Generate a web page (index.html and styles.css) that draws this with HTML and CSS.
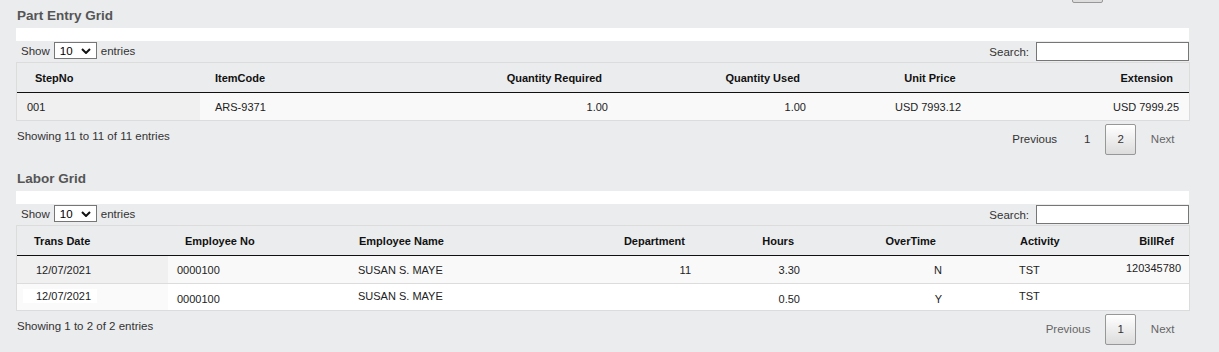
FILE: index.html
```html
<!DOCTYPE html>
<html>
<head>
<meta charset="utf-8">
<link rel="stylesheet" href="styles.css">
</head>
<body>
<div class="page">
  <div class="top-pager"><span class="pbtn current"></span></div>

  <section class="grid part">
    <h2 class="grid-title">Part Entry Grid</h2>
    <div class="white-bar"></div>
    <div class="controls">
      <label class="length">Show
        <span class="sel"><select><option>10</option></select><svg class="chev" width="10" height="6" viewBox="0 0 10 6"><path d="M1 1 L5 5 L9 1" fill="none" stroke="#111" stroke-width="2"/></svg></span>
        entries</label>
      <label class="search">Search:<input type="text"></label>
    </div>
    <div class="tbl-wrap">
      <table>
        <colgroup><col style="width:183px"><col style="width:220px"><col style="width:199px"><col style="width:198px"><col style="width:226px"><col style="width:146px"></colgroup>
        <thead>
          <tr>
            <th class="p-c1">StepNo</th>
            <th class="p-c2">ItemCode</th>
            <th class="r">Quantity Required</th>
            <th class="r">Quantity Used</th>
            <th class="c">Unit Price</th>
            <th class="r p-c6">Extension</th>
          </tr>
        </thead>
        <tbody>
          <tr class="odd">
            <td class="sort p-c1">001</td>
            <td class="p-c2">ARS-9371</td>
            <td class="r">1.00</td>
            <td class="r">1.00</td>
            <td class="c">USD 7993.12</td>
            <td class="r p-c6">USD 7999.25</td>
          </tr>
        </tbody>
      </table>
    </div>
    <div class="footer">
      <div class="info">Showing 11 to 11 of 11 entries</div>
      <div class="pager">
        <span class="pbtn">Previous</span>
        <span class="pbtn">1</span>
        <span class="pbtn current">2</span>
        <span class="pbtn disabled">Next</span>
      </div>
    </div>
  </section>

  <section class="grid labor">
    <h2 class="grid-title">Labor Grid</h2>
    <div class="white-bar"></div>
    <div class="controls">
      <label class="length">Show
        <span class="sel"><select><option>10</option></select><svg class="chev" width="10" height="6" viewBox="0 0 10 6"><path d="M1 1 L5 5 L9 1" fill="none" stroke="#111" stroke-width="2"/></svg></span>
        entries</label>
      <label class="search">Search:<input type="text"></label>
    </div>
    <div class="tbl-wrap">
      <table>
        <colgroup><col style="width:151px"><col style="width:180px"><col style="width:172px"><col style="width:182px"><col style="width:109px"><col style="width:198px"><col style="width:101px"><col style="width:79px"></colgroup>
        <thead>
          <tr>
            <th class="l-c1">Trans Date</th>
            <th class="l-c2">Employee No</th>
            <th class="l-c3">Employee Name</th>
            <th class="r">Department</th>
            <th class="r">Hours</th>
            <th class="r l-c6">OverTime</th>
            <th class="l-c7">Activity</th>
            <th class="r l-c8">BillRef</th>
          </tr>
        </thead>
        <tbody>
          <tr class="odd">
            <td class="sort l-c1">12/07/2021</td>
            <td class="l-c2">0000100</td>
            <td class="l-c3">SUSAN S. MAYE</td>
            <td class="r">11</td>
            <td class="r">3.30</td>
            <td class="r l-c6">N</td>
            <td class="l-c7">TST</td>
            <td class="r l-c8 up">120345780</td>
          </tr>
          <tr class="even">
            <td class="sort l-c1 up"><span class="hl">12/07/2021</span></td>
            <td class="l-c2 down">0000100</td>
            <td class="l-c3 up">SUSAN S. MAYE</td>
            <td class="r"></td>
            <td class="r down">0.50</td>
            <td class="r l-c6 down">Y</td>
            <td class="l-c7 up">TST</td>
            <td class="r l-c8"></td>
          </tr>
        </tbody>
      </table>
    </div>
    <div class="footer">
      <div class="info">Showing 1 to 2 of 2 entries</div>
      <div class="pager">
        <span class="pbtn disabled">Previous</span>
        <span class="pbtn current">1</span>
        <span class="pbtn disabled">Next</span>
      </div>
    </div>
  </section>
</div>
</body>
</html>
```

FILE: styles.css
```css
html, body {
  margin: 0;
  padding: 0;
  background: #ebecee;
}
body {
  font-family: "Liberation Sans", Arial, sans-serif;
  color: #333;
  font-size: 11.5px;
}
.page {
  width: 1174px;
  margin-left: 16px;
}
.top-pager {
  display: flex;
  justify-content: flex-end;
  height: 3px;
  padding-right: 87px;
}
.top-pager .pbtn {
  margin-top: -28px;
  height: 31px;
  width: 31px;
  padding: 0;
  box-sizing: border-box;
}
.grid-title {
  margin: 3px 0 2px 1px;
  font-size: 13.5px;
  line-height: 20px;
  font-weight: bold;
  color: #555;
}
.labor .grid-title {
  margin-top: 14px;
  margin-bottom: 2px;
}
.white-bar {
  height: 13px;
  background: #fff;
  width: 1173px;
}
.controls {
  display: flex;
  justify-content: space-between;
  align-items: flex-start;
  height: 21px;
  box-sizing: border-box;
  padding-top: 1px;
}
.length {
  display: flex;
  align-items: center;
  padding-left: 5px;
  height: 17px;
  color: #333;
}
.sel {
  position: relative;
  display: inline-block;
  margin: 0 4px;
  height: 17px;
}
.sel select {
  appearance: none;
  -webkit-appearance: none;
  width: 43px;
  height: 17px;
  box-sizing: border-box;
  border: 1px solid #767676;
  border-radius: 0;
  background: #fff;
  font-family: "Liberation Sans", Arial, sans-serif;
  font-size: 11.5px;
  color: #000;
  padding: 0 0 0 5px;
  margin: 0;
  display: block;
}
.sel .chev {
  position: absolute;
  left: 27px;
  top: 6px;
  pointer-events: none;
}
.search {
  display: flex;
  align-items: center;
  height: 19px;
  color: #333;
  padding-right: 1px;
}
.search input {
  margin: 0 0 0 7px;
  width: 153px;
  height: 19px;
  box-sizing: border-box;
  border: 1px solid #767676;
  background: #fff;
  padding: 0;
}
.tbl-wrap {
  border-left: 1px solid #dcdcdc;
  border-right: 1px solid #dcdcdc;
}
table {
  width: 1172px;
  border-collapse: collapse;
  table-layout: fixed;
  font-size: 11px;
}
th {
  height: 29px;
  padding: 0 10px;
  border-top: 1px solid #dcdcdc;
  border-bottom: 1px solid #111;
  font-weight: bold;
  color: #111;
  text-align: left;
  white-space: nowrap;
}
td {
  height: 28px;
  padding: 1px 10px 0;
  border-bottom: 1px solid #dcdcdc;
  color: #222;
  white-space: nowrap;
  box-sizing: border-box;
}
tr.odd td { background: #f9f9f9; }
tr.odd td.sort { background: #f0f0f0; }
tr.even td { background: #fff; }
tr.even td.sort { background: #fafafa; }
.labor td { height: 28px; }
.labor tr.even td { height: 27px; }
th.r { text-align: right; padding-right: 17px; }
td.r { text-align: right; padding-right: 11px; }
th.c { text-align: center; padding: 0; }
td.c { text-align: center; padding: 1px 4px 0 0; }
td.up { padding-top: 0; padding-bottom: 3px; }
td.down { padding-top: 3px; padding-bottom: 0; }
.hl {
  background: #fff;
  display: inline-block;
  margin-left: -13px;
  padding: 0 6px 0 13px;
  line-height: 14px;
}

/* part grid columns */
th.p-c1 { padding-left: 18px; }
td.p-c1 { padding-left: 10px; }
.p-c2 { padding-left: 15px; }
th.p-c6 { padding-right: 16px; }
td.p-c6 { padding-right: 10px; }

/* labor grid columns */
th.l-c1 { padding-left: 17px; }
td.l-c1 { padding-left: 19px; }
th.l-c2 { padding-left: 17px; }
td.l-c2 { padding-left: 9px; }
th.l-c3 { padding-left: 11px; }
td.l-c3 { padding-left: 10px; }
th.l-c6 { padding-right: 73px; }
td.l-c6 { padding-right: 67px; }
th.l-c7 { padding-left: 11px; }
td.l-c7 { padding-left: 10px; }
th.l-c8 { padding-right: 15px; }
td.l-c8 { padding-right: 8px; }

.footer {
  display: flex;
  justify-content: space-between;
  align-items: flex-start;
}
.info {
  padding: 8px 0 0 1px;
  line-height: 14px;
  color: #333;
}
.pager {
  display: flex;
  margin-top: 3px;
  padding-right: 3px;
}
.pbtn {
  display: inline-block;
  padding: 0 11.5px;
  height: 31px;
  line-height: 29px;
  box-sizing: border-box;
  margin-left: 2px;
  border: 1px solid transparent;
  border-radius: 2px;
  color: #333;
  font-size: 11.5px;
}
.pbtn.disabled { color: #666; }
.pbtn.current {
  border: 1px solid #979797;
  background: linear-gradient(to bottom, #fff 0%, #dcdcdc 100%);
  color: #333;
}
```
